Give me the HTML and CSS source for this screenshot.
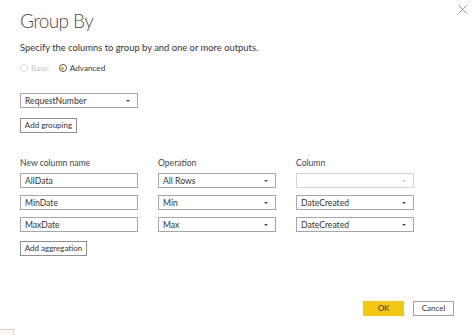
FILE: index.html
```html
<!DOCTYPE html>
<html>
<head>
<meta charset="utf-8">
<link rel="stylesheet" href="styles.css">
</head>
<body>
<div class="dialog">
  <div class="close" aria-label="Close">
    <svg width="9" height="9" viewBox="0 0 9 9"><path d="M0.5 0.5L8.5 8.5M8.5 0.5L0.5 8.5" stroke="#8a8a8a" stroke-width="0.9" fill="none"/></svg>
  </div>
  <h1 class="title">Group By</h1>
  <p class="subtitle">Specify the columns to group by and one or more outputs.</p>
  <div class="radios">
    <label class="radio disabled"><span class="dot"></span>Basic</label>
    <label class="radio checked"><span class="dot"></span>Advanced</label>
  </div>
  <div class="select grp"><span>RequestNumber</span><i class="arrow"></i></div>
  <button class="btn add-group">Add grouping</button>

  <div class="grid">
    <div class="label">New column name</div>
    <div class="label">Operation</div>
    <div class="label">Column</div>

    <div class="input">AllData</div>
    <div class="select"><span>All Rows</span><i class="arrow"></i></div>
    <div class="select disabled"><span></span><i class="arrow"></i></div>

    <div class="input">MinDate</div>
    <div class="select"><span>Min</span><i class="arrow"></i></div>
    <div class="select"><span>DateCreated</span><i class="arrow"></i></div>

    <div class="input">MaxDate</div>
    <div class="select"><span>Max</span><i class="arrow"></i></div>
    <div class="select"><span>DateCreated</span><i class="arrow"></i></div>
  </div>
  <button class="btn add-agg">Add aggregation</button>

  <div class="footer">
    <button class="btn ok">OK</button>
    <button class="btn cancel">Cancel</button>
  </div>
</div>
<div class="corner"></div>
</body>
</html>
```
FILE: styles.css
```css
html, body {
  margin: 0;
  padding: 0;
  background: #ffffff;
}
body {
  width: 474px;
  height: 335px;
  overflow: hidden;
  position: relative;
  font-family: "Lato", "Open Sans", sans-serif;
  color: #3a3a3a;
}
.dialog {
  padding: 0 20px;
  position: relative;
}
.close {
  position: absolute;
  top: 5px;
  right: 7px;
  width: 9px;
  height: 9px;
  line-height: 0;
}
.title {
  margin: 0;
  padding-top: 7px;
  font-size: 19px;
  font-weight: 300;
  line-height: 28px;
  letter-spacing: -0.6px;
  color: #4a4a4a;
}
.subtitle {
  margin: 6px 0 0;
  font-size: 9.4px;
  line-height: 14px;
  color: #333;
}
.radios {
  display: flex;
  gap: 9px;
  margin-top: 6px;
  height: 14px;
  align-items: center;
  font-size: 8.2px;
}
.radio {
  display: flex;
  align-items: center;
  gap: 3px;
}
.radio .dot {
  width: 6px;
  height: 6px;
  border-radius: 50%;
  border: 1px solid #555;
  box-sizing: content-box;
  position: relative;
}
.radio.disabled {
  color: #c8c8c8;
}
.radio.disabled .dot {
  border-color: #dcdcdc;
}
.radio.checked .dot::after {
  content: "";
  position: absolute;
  left: 1.5px;
  top: 1.5px;
  width: 3px;
  height: 3px;
  border-radius: 50%;
  background: #d8a800;
}
.select, .input {
  box-sizing: border-box;
  height: 15px;
  border: 1px solid #a6a6a6;
  display: flex;
  align-items: center;
  justify-content: space-between;
  padding: 0 7px 0 4px;
  font-size: 8.6px;
  color: #333;
  background: #fff;
}
.select.disabled {
  border-color: #d4d4d4;
}
.select.disabled .arrow {
  border-top-color: #c0c0c0;
}
.arrow {
  width: 0;
  height: 0;
  border-left: 2px solid transparent;
  border-right: 2px solid transparent;
  border-top: 2px solid #444;
}
.grp {
  width: 118px;
  margin-top: 18px;
}
.btn {
  font-family: inherit;
  box-sizing: border-box;
  height: 15px;
  border: 1px solid #8f8f8f;
  background: #fff;
  color: #333;
  font-size: 8px;
  padding: 0;
  line-height: 13px;
  display: block;
  margin: 0;
  text-align: center;
}
.add-group {
  margin-top: 10px;
  width: 57px;
}
.grid {
  display: grid;
  grid-template-columns: 118px 118px 118px;
  column-gap: 20px;
  row-gap: 7px;
  margin-top: 24px;
}
.label {
  font-size: 8.6px;
  line-height: 12px;
  height: 12px;
  margin-bottom: -3px;
  color: #444;
}
.add-agg {
  margin-top: 9px;
  width: 67px;
}
.footer {
  display: flex;
  justify-content: flex-end;
  gap: 9px;
  margin-top: 45px;
}
.ok {
  width: 41px;
  background: #f2c811;
  border-color: #f2c811;
  color: #333;
}
.cancel {
  width: 41px;
  border-color: #a0a0a0;
}
.corner {
  position: absolute;
  left: 0;
  bottom: 0;
  width: 14px;
  height: 6px;
  border-top: 1px solid #e8cde0;
  border-right: 1px solid #e8cde0;
  background: #fdf8f0;
  box-sizing: border-box;
}
```
